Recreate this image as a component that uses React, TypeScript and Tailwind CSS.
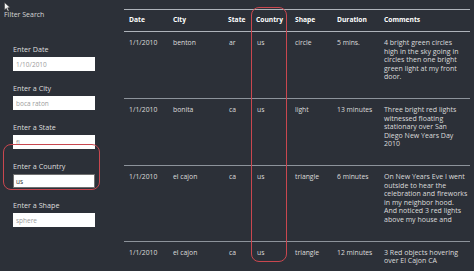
import React from "react";

type Sighting = {
  date: string;
  city: string;
  state: string;
  country: string;
  shape: string;
  duration: string;
  comments: string[];
};

// comment lines kept as they wrap in the original table
const rows: Sighting[] = [
  {
    date: "1/1/2010",
    city: "benton",
    state: "ar",
    country: "us",
    shape: "circle",
    duration: "5 mins.",
    comments: [
      "4 bright green circles",
      "high in the sky going in",
      "circles then one bright",
      "green light at my front",
      "door.",
    ],
  },
  {
    date: "1/1/2010",
    city: "bonita",
    state: "ca",
    country: "us",
    shape: "light",
    duration: "13 minutes",
    comments: [
      "Three bright red lights",
      "witnessed floating",
      "stationary over San",
      "Diego New Years Day",
      "2010",
    ],
  },
  {
    date: "1/1/2010",
    city: "el cajon",
    state: "ca",
    country: "us",
    shape: "triangle",
    duration: "6 minutes",
    comments: [
      "On New Years Eve I went",
      "outside to hear the",
      "celebration and fireworks",
      "in my neighbor hood.",
      "And noticed 3 red lights",
      "above my house and",
    ],
  },
  {
    date: "1/1/2010",
    city: "el cajon",
    state: "ca",
    country: "us",
    shape: "triangle",
    duration: "12 minutes",
    comments: ["3 Red objects hovering", "over El Cajon CA"],
  },
];

const filters = [
  { label: "Enter Date", placeholder: "1/10/2010" },
  { label: "Enter a City", placeholder: "boca raton" },
  { label: "Enter a State", placeholder: "fl" },
  { label: "Enter a Country", value: "us" },
  { label: "Enter a Shape", placeholder: "sphere" },
];

const cols = "grid grid-cols-[44px_55px_28px_39px_42px_47px_1fr]";

function App() {
  return (
    <div
      className="relative w-[474px] h-[271px] overflow-hidden bg-[#2c3038] text-[#e4e4e4] flex"
      style={{ fontFamily: '"Open Sans", "Noto Sans", sans-serif' }}
    >
      {/* cursor */}
      <svg
        className="absolute left-[4px] top-[2px]"
        width="7"
        height="10"
        viewBox="0 0 7 10"
      >
        <path d="M0.5 0.5 L0.5 8 L2.3 6.3 L3.8 9.3 L5 8.7 L3.6 5.8 L6 5.6 Z" fill="#f2f2f2" stroke="#333" strokeWidth="0.5" />
      </svg>

      {/* ===== Sidebar ===== */}
      <div className="relative w-[124px] shrink-0 pt-[10px]">
        <div className="pl-[4px] text-[7px] leading-[10px] text-[#d6d6d6]">Filter Search</div>
        <div className="pl-[13px] pt-[24px] flex flex-col gap-[12px]">
          {filters.map((f) => (
            <div key={f.label} className="flex flex-col gap-[3px]">
              <label className="text-[7.2px] leading-[10px] text-[#dedede]">{f.label}</label>
              {f.value ? (
                <input
                  readOnly
                  value={f.value}
                  className="w-[82px] h-[14px] bg-white border-[1.5px] border-[#6f6f6f] px-[2px] text-[6.5px] text-[#333] outline-none"
                />
              ) : (
                <input
                  readOnly
                  placeholder={f.placeholder}
                  className="w-[82px] h-[14px] bg-white px-[3px] text-[6.5px] text-[#333] placeholder:text-[#9c9c9c] outline-none"
                />
              )}
            </div>
          ))}
        </div>
        <div className="absolute left-[3px] top-[144px] w-[97px] h-[46px] rounded-[8px] border-[1.5px] border-[#c9474f]" />
      </div>

      {/* ===== Table ===== */}
      <div className="relative flex-1 pt-[9px] pr-[4px]">
        <div className="border-t border-[#aeb3ba]">
          <div className={`${cols} h-[22px] items-center pl-[5px] border-b border-[#aeb3ba] text-[6.7px] font-bold text-white`}>
            <div>Date</div>
            <div>City</div>
            <div>State</div>
            <div>Country</div>
            <div>Shape</div>
            <div>Duration</div>
            <div>Comments</div>
          </div>
          {rows.map((r, i) => (
            <div
              key={i}
              className={`${cols} pl-[5px] pt-[7px] pb-[16px] border-b border-[#8d939b] text-[6.8px] leading-[8.6px] text-[#dcdcdc]`}
            >
              <div>{r.date}</div>
              <div>{r.city}</div>
              <div className="pl-[1px]">{r.state}</div>
              <div className="pl-[1px]">{r.country}</div>
              <div>{r.shape}</div>
              <div>{r.duration}</div>
              <div className="text-[7px]">
                {r.comments.map((line) => (
                  <div key={line} className="whitespace-nowrap">
                    {line}
                  </div>
                ))}
              </div>
            </div>
          ))}
        </div>
        <div className="absolute left-[127px] top-[7px] w-[36px] h-[255px] rounded-[8px] border-[1.5px] border-[#c9474f]" />
      </div>
    </div>
  );
}

export default App;
